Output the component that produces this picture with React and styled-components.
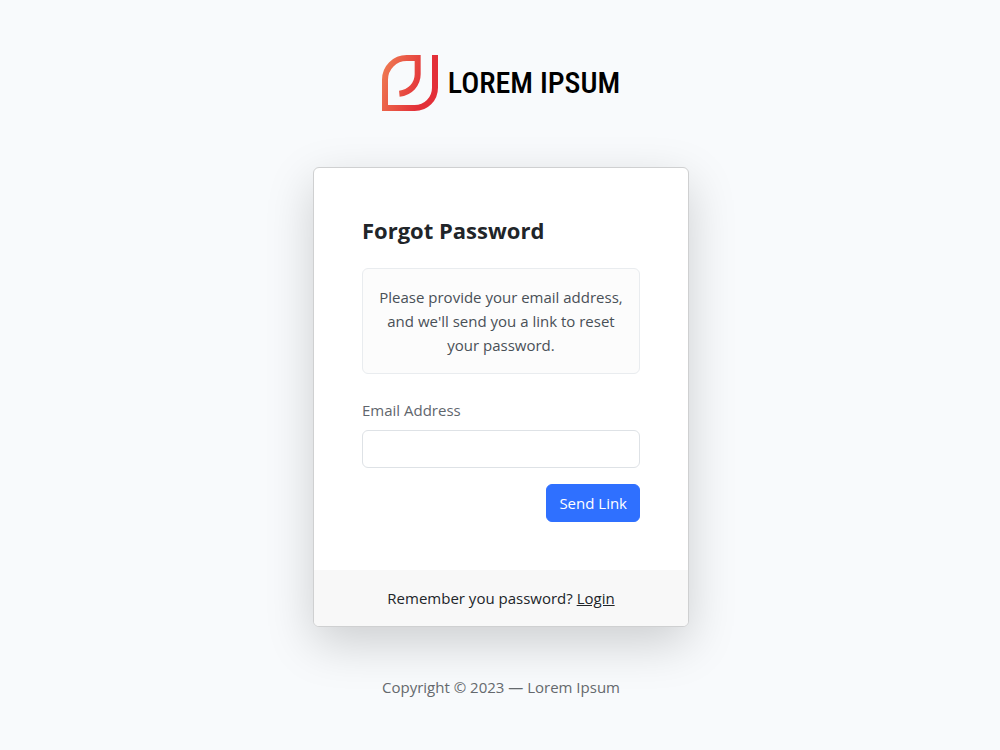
import React, { useState } from "react";
import styled, { createGlobalStyle } from "styled-components";

const GlobalStyle = createGlobalStyle`
  *, *::before, *::after {
    box-sizing: border-box;
  }
  body {
    margin: 0;
    background: #f8fafc;
    color: #212529;
    font-family: "Open Sans", "Noto Sans", sans-serif;
    font-size: 15px;
    line-height: 24px;
  }
`;

const Page = styled.main`
  display: flex;
  flex-direction: column;
  align-items: center;
  padding: 48px 11px 48px 13px;
`;

const Brand = styled.div`
  display: flex;
  align-items: center;
  gap: 10px;
  height: 70px;
  margin-bottom: 49px;
`;

const Mark = styled.svg`
  width: 56px;
  height: 56px;
`;

const BrandName = styled.span`
  color: #000;
  font-family: "Roboto Condensed", "Liberation Sans Narrow", "Roboto", sans-serif;
  font-size: 30px;
  line-height: 40px;
  font-weight: 500;
  white-space: nowrap;
`;

const Card = styled.section`
  width: 100%;
  max-width: 376px;
  background: #fff;
  border: 1px solid #cfd0d1;
  border-radius: 6px;
  box-shadow: 0 16px 48px rgba(0, 0, 0, 0.175);
  overflow: hidden;
`;

const CardBody = styled.div`
  padding: 48px;
`;

const Title = styled.h1`
  margin: 0 0 24px;
  font-size: 22px;
  line-height: 28px;
  font-weight: 700;
`;

const Notice = styled.div`
  margin-bottom: 24px;
  padding: 16px;
  background: #fcfcfc;
  border: 1px solid #e9ecef;
  border-radius: 6px;
  color: #495057;
  text-align: center;
`;

const Label = styled.label`
  display: block;
  margin-bottom: 8px;
  color: #5f666d;
`;

const Input = styled.input`
  display: block;
  width: 100%;
  height: 38px;
  margin-bottom: 16px;
  padding: 6px 12px;
  background: #fff;
  border: 1px solid #dee2e6;
  border-radius: 6px;
  color: inherit;
  font: inherit;
`;

const Actions = styled.div`
  display: flex;
  justify-content: flex-end;
`;

const Button = styled.button`
  height: 38px;
  padding: 6px 12px;
  background: #2f70ff;
  border: 1px solid #2f70ff;
  border-radius: 6px;
  color: #fff;
  font: inherit;
  cursor: pointer;
`;

const CardFooter = styled.div`
  padding: 16px;
  background: #f8f8f8;
  text-align: center;
`;

const LoginLink = styled.a`
  color: #212529;
  text-decoration: underline;
`;

const Copyright = styled.footer`
  margin-top: 48px;
  color: #65696d;
  text-align: center;
`;

function Logo() {
  return (
    <Brand>
      <Mark viewBox="0 0 168 168" fill="none" aria-hidden="true">
        <defs>
          <linearGradient id="mark" gradientUnits="userSpaceOnUse" x1="0" y1="60" x2="125" y2="100">
            <stop offset="0" stopColor="#ee7650" />
            <stop offset="1" stopColor="#e32f38" />
          </linearGradient>
        </defs>
        <path
          d="M52 116C84 113 107 88 107 58V9H74C38 9 9 38 9 74V159H98C132 159 159 132 159 98V0"
          stroke="url(#mark)"
          strokeWidth="18"
        />
      </Mark>
      <BrandName>LOREM IPSUM</BrandName>
    </Brand>
  );
}

function App() {
  const [email, setEmail] = useState("");

  const onSubmit = (event) => {
    event.preventDefault();
  };

  return (
    <>
      <GlobalStyle />
      <Page>
        <Logo />
        <Card>
          <CardBody>
            <Title>Forgot Password</Title>
            <Notice>
              Please provide your email address, and we'll send you a link to reset your password.
            </Notice>
            <form onSubmit={onSubmit}>
              <Label htmlFor="email">Email Address</Label>
              <Input
                id="email"
                type="email"
                name="email"
                value={email}
                onChange={(e) => setEmail(e.target.value)}
              />
              <Actions>
                <Button type="submit">Send Link</Button>
              </Actions>
            </form>
          </CardBody>
          <CardFooter>
            Remember you password? <LoginLink href="#login">Login</LoginLink>
          </CardFooter>
        </Card>
        <Copyright>Copyright © 2023 — Lorem Ipsum</Copyright>
      </Page>
    </>
  );
}

export default App;
